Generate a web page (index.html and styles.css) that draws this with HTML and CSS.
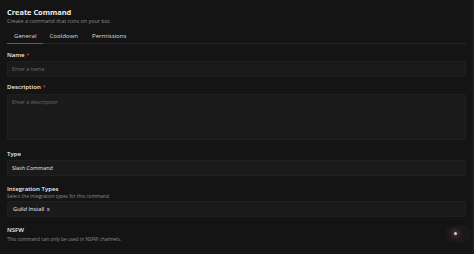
FILE: index.html
```html
<!DOCTYPE html>
<html>
<head>
<meta charset="utf-8">
<link rel="stylesheet" href="styles.css">
</head>
<body>
<div class="modal">
  <div class="header">
    <div class="title">Create Command</div>
    <div class="subtitle">Create a command that runs on your bot.</div>
  </div>
  <div class="tabs">
    <div class="tab active">General</div>
    <div class="tab">Cooldown</div>
    <div class="tab">Permissions</div>
  </div>
  <div class="field f-name">
    <div class="label">Name <span class="req">*</span></div>
    <div class="input"><span class="ph">Enter a name</span></div>
  </div>
  <div class="field f-desc">
    <div class="label">Description <span class="req">*</span></div>
    <div class="input textarea"><span class="ph">Enter a description</span></div>
  </div>
  <div class="field f-type">
    <div class="label">Type</div>
    <div class="input"><span class="val">Slash Command</span></div>
  </div>
  <div class="field f-int">
    <div class="label">Integration Types</div>
    <div class="help">Select the integration types for this command.</div>
    <div class="input multi"><span class="chip">Guild Install <span class="x">x</span></span></div>
  </div>
  <div class="field f-nsfw">
    <div class="nsfw-text">
      <div class="label">NSFW</div>
      <div class="help">This command can only be used in NSFW channels.</div>
    </div>
    <div class="toggle"><span class="knob"></span></div>
  </div>
</div>
</body>
</html>
```
FILE: styles.css
```css
html, body {
  margin: 0;
  padding: 0;
  background: #141414;
  width: 474px;
  height: 254px;
  overflow: hidden;
}
body {
  font-family: "Open Sans", "Noto Sans", sans-serif;
  color: #ececec;
  border-right: 2px solid #1b1b1b;
  box-sizing: border-box;
}
.modal {
  padding: 7px 6px 0 7px;
  display: flex;
  flex-direction: column;
}
.title {
  font-size: 7.4px;
  font-weight: 700;
  line-height: 10px;
  color: #f2f2f2;
}
.subtitle {
  font-size: 5.4px;
  line-height: 8px;
  margin-top: 0;
  color: #8c8c8c;
}
.tabs {
  display: flex;
  border-bottom: 1px solid #252525;
  height: 19px;
  box-sizing: border-box;
}
.tab {
  font-size: 6.1px;
  line-height: 15px;
  padding-top: 3px;
  color: #dcdcdc;
  padding-left: 7px;
  padding-right: 7px;
}
.tab.active {
  border-bottom: 1px solid #b23a3a;
  height: 19px;
  box-sizing: border-box;
}
.tab:nth-child(2) { padding-left: 6px; padding-right: 7px; }
.tab:nth-child(3) { padding-left: 7px; }
.field {
  display: flex;
  flex-direction: column;
}
.label {
  font-size: 6.1px;
  font-weight: 600;
  line-height: 8px;
  color: #efefef;
}
.req { color: #b84040; }
.help {
  font-size: 4.8px;
  line-height: 6px;
  color: #8e8e8e;
}
.input {
  height: 16px;
  background: #1a1a1a;
  border: 1px solid #202020;
  box-sizing: border-box;
  border-radius: 2px;
  display: flex;
  align-items: center;
  padding-left: 4px;
  font-size: 5.2px;
  margin-top: 2px;
}
.ph { color: #707070; }
.val { color: #e8e8e8; font-size: 5.4px; }
.textarea {
  height: 46px;
  align-items: flex-start;
  padding-top: 3px;
  margin-top: 3px;
}
.f-name { margin-top: 7px; }
.f-desc { margin-top: 6px; }
.f-type { margin-top: 10px; }
.f-int { margin-top: 9px; }
.f-int .input { margin-top: 2px; }
.chip {
  font-size: 5.7px;
  color: #efefef;
  padding-left: 1px;
}
.x { margin-left: 1px; }
.f-nsfw {
  flex-direction: row;
  justify-content: space-between;
  align-items: flex-start;
  margin-top: 9px;
}
.f-nsfw .help { margin-top: 2px; }
.toggle {
  width: 22px;
  height: 12px;
  border-radius: 6px;
  background: #1b181b;
  margin-right: -3px;
  margin-top: 2px;
  position: relative;
  box-shadow: 0 0 4px rgba(120, 60, 70, 0.35);
}
.knob {
  position: absolute;
  left: 7px;
  top: 4px;
  width: 3px;
  height: 3px;
  border-radius: 50%;
  background: #d8d0d4;
  box-shadow: 0 0 4px 2px rgba(150, 90, 110, 0.45);
}
```
